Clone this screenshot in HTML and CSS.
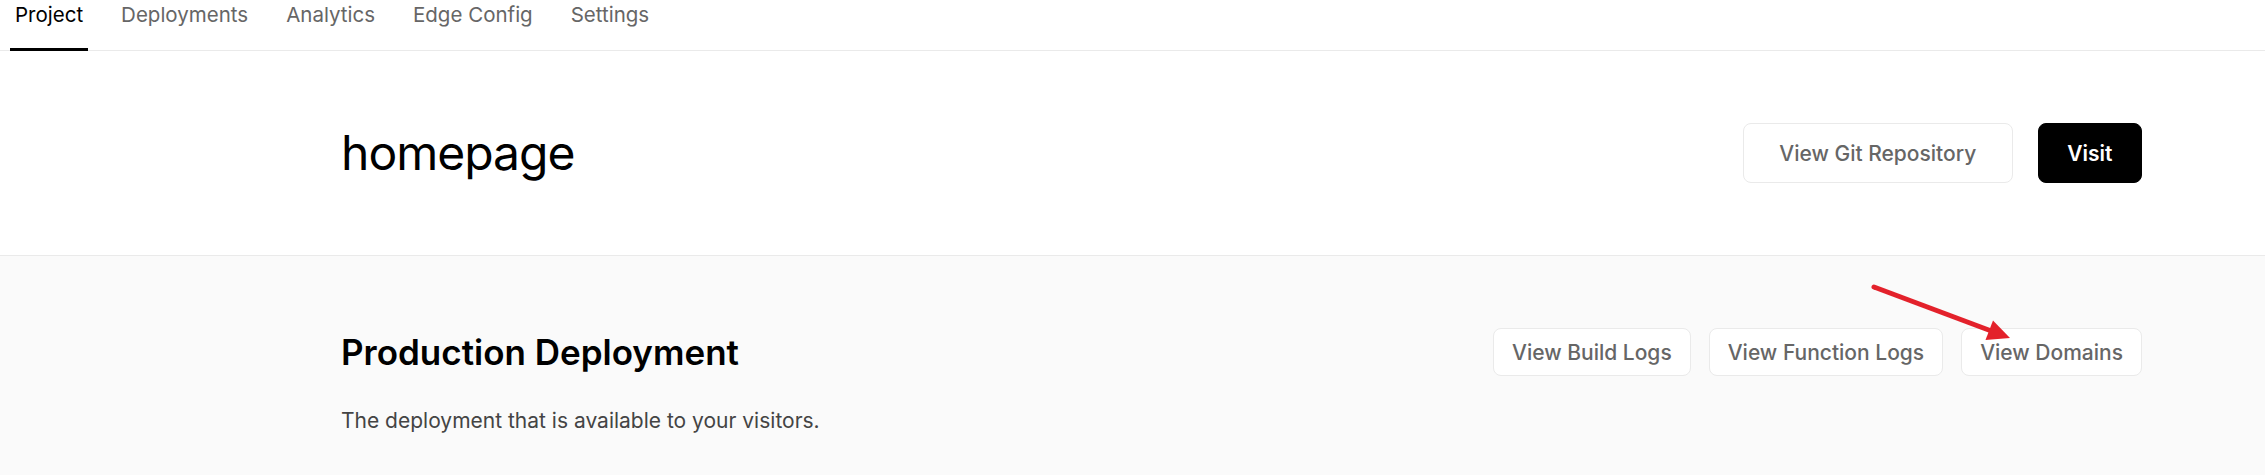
FILE: index.html
```html
<!DOCTYPE html>
<html lang="en">
<head>
<meta charset="utf-8">
<title>homepage</title>
<link rel="stylesheet" href="styles.css">
</head>
<body>
<nav class="tabs">
  <a class="tab active">Project</a>
  <a class="tab">Deployments</a>
  <a class="tab">Analytics</a>
  <a class="tab">Edge Config</a>
  <a class="tab">Settings</a>
</nav>
<header class="hero">
  <div class="container row">
    <h1 class="title">homepage</h1>
    <div class="actions wide">
      <button class="btn btn-outline btn-lg">View Git Repository</button>
      <button class="btn btn-dark btn-lg">Visit</button>
    </div>
  </div>
</header>
<section class="production">
  <div class="container">
    <div class="row">
      <h2 class="subtitle">Production Deployment</h2>
      <div class="actions">
        <button class="btn btn-outline">View Build Logs</button>
        <button class="btn btn-outline">View Function Logs</button>
        <button class="btn btn-outline">View Domains</button>
      </div>
    </div>
    <p class="desc">The deployment that is available to your visitors.</p>
  </div>
</section>
<svg class="annotation" width="2265" height="475" viewBox="0 0 2265 475" aria-hidden="true">
  <line x1="1874" y1="287" x2="1990" y2="330.5" stroke="#e3212b" stroke-width="5" stroke-linecap="round"/>
  <polygon points="2010,338 1985.5,340 1993,320.5" fill="#e3212b"/>
</svg>
</body>
</html>
```
FILE: styles.css
```css
* { box-sizing: border-box; }
html, body { margin: 0; padding: 0; }
body {
  font-family: Inter, "Noto Sans", sans-serif;
  background: #fafafa;
  min-height: 475px;
  position: relative;
  color: #000;
}
.tabs {
  display: flex;
  gap: 28px;
  padding-left: 10px;
  background: #fff;
  border-bottom: 1px solid #eaeaea;
}
.tab {
  font-size: 20.5px;
  line-height: 29px;
  padding: 0 5px 19px;
  margin-bottom: -1px;
  color: #666;
  border-bottom: 3px solid transparent;
  text-decoration: none;
}
.tab.active {
  color: #000;
  border-bottom-color: #000;
}
.hero {
  background: #fff;
  border-bottom: 1px solid #eaeaea;
  padding: 72px 0;
}
.container {
  padding-left: 341px;
  padding-right: 123px;
}
.row {
  display: flex;
  align-items: center;
  justify-content: space-between;
}
.title {
  margin: 0;
  font-size: 48px;
  font-weight: 400;
  letter-spacing: -1px;
  line-height: 60px;
}
.actions {
  display: flex;
  gap: 18px;
}
.actions.wide { gap: 25px; }
.btn {
  font-family: inherit;
  font-size: 21px;
  font-weight: 500;
  height: 48px;
  padding: 0 18px;
  border-radius: 8px;
  cursor: pointer;
}
.btn-lg {
  height: 60px;
  padding: 0 35.5px;
}
.btn-outline {
  background: #fff;
  color: #666;
  border: 1px solid #eaeaea;
}
.btn-dark {
  background: #000;
  color: #fff;
  border: 1px solid #000;
  font-weight: 600;
  padding: 0 28.5px;
}
.production {
  padding-top: 72px;
}
.subtitle {
  margin: 0;
  font-size: 35px;
  font-weight: 600;
  line-height: 48px;
}
.desc {
  margin: 29px 0 0;
  font-size: 21px;
  line-height: 31px;
  color: #444;
}
.annotation {
  position: absolute;
  top: 0;
  left: 0;
  pointer-events: none;
}
```
